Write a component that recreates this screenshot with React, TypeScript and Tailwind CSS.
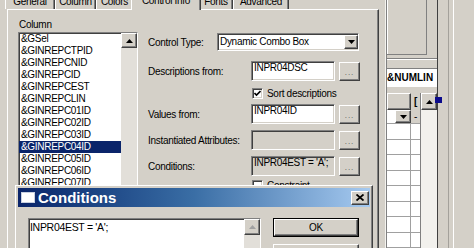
import React from 'react'

const sunken =
  'border border-t-[#808080] border-l-[#808080] border-b-white border-r-white shadow-[inset_1px_1px_0_#404040,inset_-1px_-1px_0_#d4d0c8]'
const raised =
  'border border-t-white border-l-white border-b-[#404040] border-r-[#404040] shadow-[inset_-1px_-1px_0_#808080]'

const tabs = [
  { label: 'General', w: 'w-[50px]' },
  { label: 'Column', w: 'w-[41px]' },
  { label: 'Colors', w: 'w-[37px]' },
  { label: 'Control Info', w: 'w-[70px]', sel: true },
  { label: 'Fonts', w: 'w-[34px]' },
  { label: 'Advanced', w: 'w-[56px]' },
]

const columns = [
  '&GSel',
  '&GINREPCTPID',
  '&GINREPCNID',
  '&GINREPCID',
  '&GINREPCEST',
  '&GINREPCLIN',
  '&GINREPC01ID',
  '&GINREPC02ID',
  '&GINREPC03ID',
  '&GINREPC04ID',
  '&GINREPC05ID',
  '&GINREPC06ID',
  '&GINREPC07ID',
]

function Arrow({ up, color = '#000' }: { up?: boolean; color?: string }) {
  return (
    <svg width="7" height="4" viewBox="0 0 7 4">
      <polygon points={up ? '3.5,0 7,4 0,4' : '0,0 7,0 3.5,4'} fill={color} />
    </svg>
  )
}

function DotsButton() {
  return (
    <div className={`ml-[4px] w-[21px] h-[19px] bg-[#d4d0c8] ${raised} flex items-end justify-center pb-[3px]`}>
      <span className="text-[8px] leading-none text-[#505050] tracking-[1px]">...</span>
    </div>
  )
}

function Field({ label, value, gray }: { label: string; value: string; gray?: boolean }) {
  return (
    <div className="flex items-center">
      <span className="w-[103px] shrink-0">{label}</span>
      <div
        className={`w-[84px] h-[20px] overflow-hidden whitespace-nowrap ${gray ? 'bg-[#d4d0c8]' : 'bg-white'} ${sunken} pl-[2px] leading-[10px] pt-[1px]`}
      >
        {value}
      </div>
      <DotsButton />
    </div>
  )
}

function Check({ label, checked }: { label: string; checked?: boolean }) {
  return (
    <div className="flex items-center pl-[104px] h-[11px]">
      <div className={`w-[11px] h-[11px] bg-white ${sunken} flex items-center justify-center`}>
        {checked && (
          <svg width="7" height="7" viewBox="0 0 7 7">
            <path d="M0.5 3 L2.5 5 L6.5 1" stroke="#000" strokeWidth="1.6" fill="none" />
          </svg>
        )}
      </div>
      <span className="ml-[4px] leading-none">{label}</span>
    </div>
  )
}

export default function App() {
  return (
    <div className="relative w-[474px] h-[248px] overflow-hidden bg-[#d4d0c8] text-black text-[10px] tracking-[-0.3px] font-['Liberation_Sans',Arial,sans-serif] flex">
      {/* properties dialog */}
      <div className="w-[379px] shrink-0 flex flex-col">
        <div className="flex items-end h-[9px] pl-[5px]">
          {tabs.map(t =>
            t.sel ? (
              <div
                key={t.label}
                className={`relative z-10 -mx-[2px] mb-[-1px] h-[20px] ${t.w} bg-[#d4d0c8] border-l border-l-white border-r border-r-[#404040] shadow-[inset_-1px_0_0_#808080] text-center pt-[5px] leading-[12px]`}
              >
                {t.label}
              </div>
            ) : (
              <div
                key={t.label}
                className={`h-[17px] ${t.w} border-l border-l-white border-r border-r-[#404040] shadow-[inset_-1px_0_0_#808080] text-center pt-[4px] leading-[12px]`}
              >
                {t.label}
              </div>
            )
          )}
        </div>

        <div className="ml-[7px] w-[372px] h-[260px] shrink-0 border-l border-t border-l-white border-t-white border-r border-r-[#404040] shadow-[inset_-1px_0_0_#808080] flex">
          {/* column list */}
          <div className="flex flex-col ml-[10px]">
            <span className="mt-[9px] ml-[1px] leading-[12px]">Column</span>
            <div className={`mt-[1px] w-[120px] h-[170px] bg-white ${sunken} flex`}>
              <div className="flex-1 flex flex-col">
                {columns.map((c, i) => (
                  <div
                    key={c}
                    className={`h-[12px] leading-[12px] pl-[2px] ${i === 9 ? 'bg-[#0a246a] text-white' : ''}`}
                  >
                    {c}
                  </div>
                ))}
              </div>
              <div className="w-[16px] bg-[#e2dfd9]">
                <div className={`h-[15px] bg-[#d4d0c8] ${raised} flex items-center justify-center`}>
                  <Arrow up />
                </div>
              </div>
            </div>
          </div>

          {/* control info fields */}
          <div className="ml-[10px] flex flex-col">
            <div className="mt-[23px] flex items-center">
              <span className="w-[69px] shrink-0">Control Type:</span>
              <div className={`w-[142px] h-[18px] bg-white ${sunken} flex items-center pl-[2px]`}>
                <span className="flex-1 leading-none">Dynamic Combo Box</span>
                <div className={`w-[14px] h-[14px] bg-[#d4d0c8] ${raised} flex items-center justify-center`}>
                  <Arrow />
                </div>
              </div>
            </div>
            <div className="mt-[10px]">
              <Field label="Descriptions from:" value="INPR04DSC" />
            </div>
            <div className="mt-[7px]">
              <Check label="Sort descriptions" checked />
            </div>
            <div className="mt-[5px]">
              <Field label="Values from:" value="INPR04ID" />
            </div>
            <div className="mt-[6px]">
              <Field label="Instantiated Attributes:" value="" gray />
            </div>
            <div className="mt-[6px]">
              <Field label="Conditions:" value="INPR04EST = 'A';" gray />
            </div>
            <div className="mt-[4px]">
              <Check label="Constraint" />
            </div>
          </div>
        </div>
      </div>

      {/* form designer */}
      <div className="flex h-full">
        <div className="w-[7px] border-r border-r-[#f4f3ef]" />
        <div className="relative w-[52px] flex flex-col border-l border-l-[#808080] border-r border-r-[#404040]">
          <div className="h-[67px] border-b border-b-[#808080]">
            <div className="w-[40px] h-[55px] border-r border-b border-r-[#808080] border-b-[#808080] shadow-[inset_1px_0_0_#ffffff]" />
          </div>
          <div className="h-[11px] border-t border-t-white border-b border-b-[#808080]" />
          <div className="h-[18px] bg-white font-bold leading-[18px] tracking-normal">&amp;NUMLIN</div>
          <div className="h-[7px]" />
          <div className="flex flex-1">
            <div className="w-[33px] flex flex-col">
              <div className="h-[17px] flex">
                <div className={`w-[24px] bg-[#d4d0c8] ${raised}`} />
                <div className="w-[9px] bg-[#d4d0c8] font-bold flex items-center justify-center">[</div>
              </div>
              <div className="h-[14px] flex bg-white border-b border-b-[#a0a0a0]">
                <div className="w-[8px]" />
                <div className={`w-[16px] bg-[#d4d0c8] ${raised} flex items-center justify-center`}>
                  <Arrow />
                </div>
                <div className="w-[9px] bg-[#d4d0c8] flex items-center justify-center">-</div>
              </div>
              {Array.from({ length: 8 }).map((_, i) => (
                <div key={i} className="h-[15.5px] shrink-0 flex bg-white border-b border-b-[#a0a0a0]">
                  <div className="w-[24px] border-r border-r-[#a0a0a0]" />
                  <div className="w-[9px]" />
                </div>
              ))}
            </div>
            <div className="flex-1 flex flex-col bg-[#f2f1ed] border-l border-l-[#808080]">
              <div className={`h-[17px] bg-[#d4d0c8] ${raised} flex items-center justify-center`}>
                <Arrow up />
              </div>
            </div>
          </div>
          <div className="absolute left-[48px] top-[97px] w-[7px] h-[6px] bg-[#0b0b8c]" />
        </div>
        <div className="w-[10px]" />
        <div className="w-[6px] border-l border-l-[#a4a19b] border-r border-r-white" />
      </div>

      {/* conditions dialog */}
      <div className="absolute left-[15px] top-[185px] w-[358px] h-[80px] bg-[#d4d0c8] border border-t-white border-l-white border-b-[#404040] border-r-[#404040] shadow-[inset_-1px_-1px_0_#808080] p-[2px] flex flex-col">
        <div className="h-[19px] shrink-0 flex items-center bg-linear-to-r from-[#0a246a] via-[#3a6ea5] to-[#a6caf0]">
          <div className="ml-[3px] w-[14px] h-[11px] bg-white border border-[#c8d0e0]" />
          <span className="ml-[3px] text-[15px] font-bold text-white leading-none tracking-normal">Conditions</span>
          <div className={`ml-auto mr-[1px] w-[18px] h-[14px] bg-[#d4d0c8] ${raised} flex items-center justify-center`}>
            <svg width="8" height="7" viewBox="0 0 8 7">
              <path d="M0.5 0.5 L7.5 6.5 M7.5 0.5 L0.5 6.5" stroke="#000" strokeWidth="1.8" />
            </svg>
          </div>
        </div>
        <div className="flex">
          <div className={`ml-[10px] mt-[11px] w-[233px] h-[60px] bg-white ${sunken} flex`}>
            <div className="flex-1 pl-[1px] pt-[2px] leading-[12px] text-[10.5px]">INPR04EST = 'A';</div>
            <div className="w-[16px] bg-[#e2dfd9]">
              <div className={`h-[16px] bg-[#d4d0c8] ${raised} flex items-center justify-center`}>
                <Arrow up color="#a0a0a0" />
              </div>
            </div>
          </div>
          <div className="ml-[12px] mt-[11px] flex flex-col">
            <div className="w-[86px] h-[19px] border border-black">
              <div className={`h-full bg-[#d4d0c8] ${raised} flex items-center justify-center`}>OK</div>
            </div>
            <div className="mt-[7px] w-[86px] h-[19px]">
              <div className={`h-full bg-[#d4d0c8] ${raised}`} />
            </div>
          </div>
        </div>
      </div>
    </div>
  )
}
